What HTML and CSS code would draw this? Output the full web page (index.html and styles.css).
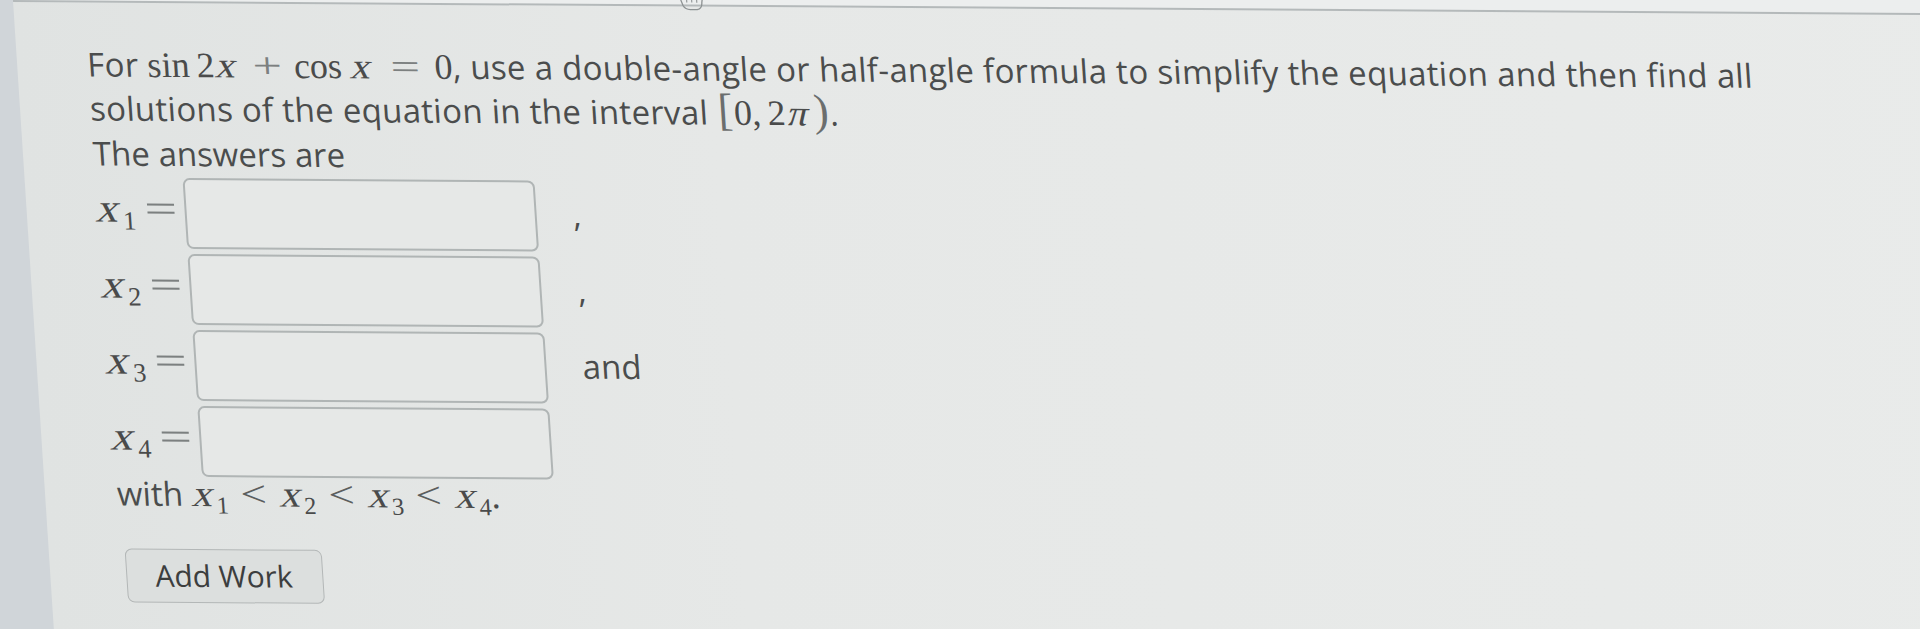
FILE: index.html
```html
<!DOCTYPE html>
<html lang="en">
<head>
<meta charset="utf-8">
<title>Question</title>
<link rel="stylesheet" href="styles.css">
</head>
<body>
<div class="page">
  <div class="topbar">
    <svg class="cursor" width="30" height="16" viewBox="0 0 30 16" aria-hidden="true">
      <path d="M3 0 L6 9 Q8 13 13 13 L20 13 Q25 12 25 6 L26 0" fill="none" stroke="#8d9293" stroke-width="1.3"/>
      <path d="M10 0 L10 6 M15 0 L15 6 M20 0 L20 6" fill="none" stroke="#8d9293" stroke-width="1.1"/>
    </svg>
  </div>
  <div class="content">
    <p class="q">For <span class="m"><span class="fn">sin</span><span class="num">2</span><span class="v">x</span><span class="o bin">+</span><span class="fn">cos</span><span class="v">x</span><span class="o rel">=</span><span class="num">0</span></span>, use a double-angle or half-angle formula to simplify the equation and then find all<br>solutions of the equation in the interval <span class="m"><span class="br">[</span>0,<span class="sp"></span>2<span class="v">π</span><span class="br">)</span></span>.</p>
    <p class="lead">The answers are</p>
    <div class="answers">
      <div class="row">
        <span class="lbl"><span class="v">x</span><sub>1</sub><span class="o rel">=</span></span>
        <span class="box"></span>
        <span class="suf">,</span>
      </div>
      <div class="row">
        <span class="lbl"><span class="v">x</span><sub>2</sub><span class="o rel">=</span></span>
        <span class="box"></span>
        <span class="suf">,</span>
      </div>
      <div class="row">
        <span class="lbl"><span class="v">x</span><sub>3</sub><span class="o rel">=</span></span>
        <span class="box"></span>
        <span class="suf">and</span>
      </div>
      <div class="row">
        <span class="lbl"><span class="v">x</span><sub>4</sub><span class="o rel">=</span></span>
        <span class="box"></span>
      </div>
    </div>
    <p class="with">with <span class="m"><span class="v">x</span><sub>1</sub><span class="o rel">&lt;</span><span class="v">x</span><sub>2</sub><span class="o rel">&lt;</span><span class="v">x</span><sub>3</sub><span class="o rel">&lt;</span><span class="v">x</span><sub>4</sub>.</span></p>
    <button class="btn" type="button">Add Work</button>
  </div>
</div>
</body>
</html>
```

FILE: styles.css
```css
html, body {
  margin: 0;
  height: 629px;
  overflow: hidden;
  background: #d0d5d9;
}

body {
  font-family: "Open Sans", "DejaVu Sans", sans-serif;
  color: #4b4d4d;
}

.page {
  position: relative;
  width: 1990px;
  height: 700px;
  margin: -30px 0 0 11px;
  transform-origin: 0 0;
  transform: matrix(1, 0.0068, 0.065, 1, 0, 0);
  background: linear-gradient(90deg, #e0e3e2 0%, #e6e8e7 35%, #e9ebea 100%);
}

.topbar {
  height: 30px;
  background: #eceeee;
  border-bottom: 2px solid #b4b9ba;
}

.cursor {
  position: absolute;
  left: 664px;
  top: 22px;
}

.content {
  padding: 41px 0 0 70px;
}

.q {
  margin: 0;
  font-size: 33px;
  line-height: 41px;
  letter-spacing: 0.32px;
  white-space: nowrap;
}

.lead {
  margin: 3px 0 0;
  font-size: 33px;
  line-height: 41px;
}

.m {
  font-family: "Liberation Serif", "DejaVu Serif", serif;
  font-size: 36px;
  letter-spacing: 0;
  color: #4a4b4b;
}

.fn { margin-right: 0.2em; }

.v {
  display: inline-block;
  font-family: "Liberation Serif", "DejaVu Serif", serif;
  font-style: normal;
  transform: skewX(-16deg) scaleX(1.12);
  margin: 0 5px 0 4px;
}

.o {
  display: inline-block;
  transform: scaleX(1.45);
  color: #7c8080;
}

.bin { margin: 0 16px; }
.rel { margin: 0 19px; }

.br { font-size: 1.25em; color: #6b6e6e; margin: 0 1px; }
.sp { display: inline-block; width: 0.18em; }

.answers {
  margin-top: 4px;
  display: flex;
  flex-direction: column;
  gap: 5px;
}

.row {
  display: flex;
  align-items: center;
  height: 71px;
}

.lbl {
  width: 88px;
  box-sizing: border-box;
  padding-left: 3px;
  padding-bottom: 10px;
  font-family: "Liberation Serif", "DejaVu Serif", serif;
  font-size: 40px;
  white-space: nowrap;
  color: #4a4b4b;
}

.lbl .v { margin: 0 3px 0 0; }
.lbl .rel { margin: 0 0 0 14px; }

sub {
  font-size: 0.66em;
  vertical-align: -0.3em;
  line-height: 0;
}

.box {
  width: 352px;
  height: 71px;
  box-sizing: border-box;
  border: 2px solid #b0b5b5;
  border-radius: 7px;
  background: #e6e8e7;
}

.suf {
  margin-left: 36px;
  font-size: 33px;
  line-height: 41px;
  padding-bottom: 5px;
}

.with {
  margin: 2px 0 0 2px;
  font-size: 33px;
  line-height: 30px;
  white-space: nowrap;
}

.with .m { font-size: 37px; }
.with .v { margin: 0 2px 0 4px; }
.with .rel { margin: 0 15px; transform: scaleX(1.25); color: #5b5e5e; }

.btn {
  display: block;
  margin: 40px 0 0 6px;
  width: 197px;
  height: 54px;
  box-sizing: border-box;
  padding: 0 0 0 28px;
  text-align: left;
  font-family: "Open Sans", "DejaVu Sans", sans-serif;
  font-size: 30px;
  line-height: 50px;
  color: #3c3e3e;
  background: #dcdfde;
  border: 1.5px solid #b3b7b7;
  border-radius: 7px;
}
```
